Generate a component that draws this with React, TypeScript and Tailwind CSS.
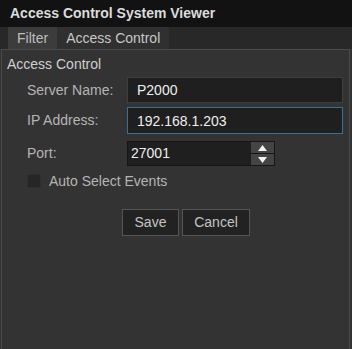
import { useState } from "react";

export default function App() {
  const [tab] = useState("Filter");
  return (
    <div className="w-[352px] h-[349px] bg-[#333333] flex flex-col overflow-hidden font-['Liberation_Sans',Arial,sans-serif] text-[#d2d2d2]">
      <div className="h-[27px] shrink-0 bg-[#121212] px-[10px] flex items-center text-[14px] font-bold text-[#dcdcdc]">
        Access Control System Viewer
      </div>
      <div className="h-[22px] shrink-0 bg-[#282828] flex items-stretch pl-[8px] text-[14px]">
        <div className={`px-[9px] flex items-center ${tab === "Filter" ? "bg-[#3c3c3c]" : ""} text-[#bdbdbd]`}>Filter</div>
        <div className="px-[9px] flex items-center bg-[#303030] text-[#c8c8c8]">Access Control</div>
      </div>
      <div className="flex-1 border-t border-l border-r border-[#4a4a4a] mx-[1px] mr-[2px] pt-[5px]">
        <div className="px-[5px] text-[14px] leading-[18px] text-[#cfcfcf]">Access Control</div>
        <div className="mt-[4px] flex flex-col gap-[4px] pl-[25px] pr-[6px]">
          <div className="flex items-center">
            <label className="w-[100px] text-[14px] text-[#b5b5b5]">Server Name:</label>
            <input readOnly value="P2000" className="flex-1 h-[26px] bg-[#1f1f1f] border border-[#3e3e3e] px-[9px] text-[14px] text-[#eeeeee] outline-none" />
          </div>
          <div className="flex items-center">
            <label className="w-[100px] text-[14px] text-[#b5b5b5]">IP Address:</label>
            <input readOnly value="192.168.1.203" className="flex-1 h-[27px] bg-[#1f1f1f] border border-[#3a6f94] px-[9px] text-[14px] text-[#eeeeee] outline-none" />
          </div>
          <div className="flex items-center mt-[3px]">
            <label className="w-[100px] text-[14px] text-[#b5b5b5]">Port:</label>
            <div className="flex h-[25px] border border-[#161616]">
              <input readOnly value="27001" className="w-[123px] bg-[#1f1f1f] px-[3px] text-[14px] text-[#eeeeee] outline-none" />
              <div className="w-[23px] flex flex-col bg-[#161616] gap-[1px]">
                <button className="flex-1 bg-[#444444] flex items-center justify-center">
                  <svg width="9" height="6" viewBox="0 0 9 6"><path d="M4.5 0L9 6H0z" fill="#f2f2f2" /></svg>
                </button>
                <button className="flex-1 bg-[#444444] flex items-center justify-center">
                  <svg width="9" height="6" viewBox="0 0 9 6"><path d="M0 0h9L4.5 6z" fill="#f2f2f2" /></svg>
                </button>
              </div>
            </div>
          </div>
          <label className="flex items-center gap-[8px] mt-[4px] h-[14px]">
            <span className="w-[14px] h-[14px] bg-[#262626] border border-[#2e2e2e]" />
            <span className="text-[14px] text-[#b5b5b5]">Auto Select Events</span>
          </label>
        </div>
        <div className="mt-[21px] flex justify-center gap-[3px] pl-[21px]">
          <button className="w-[57px] h-[27px] bg-[#222222] border border-[#555555] text-[14px] text-[#c4c4c4]">Save</button>
          <button className="w-[68px] h-[27px] bg-[#222222] border border-[#555555] text-[14px] text-[#c4c4c4]">Cancel</button>
        </div>
      </div>
    </div>
  );
}
